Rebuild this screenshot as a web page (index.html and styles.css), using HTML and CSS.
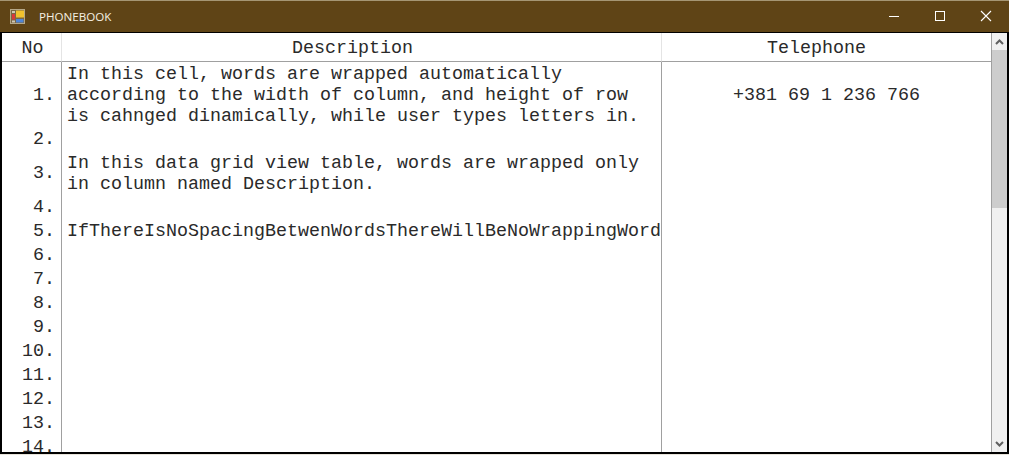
FILE: index.html
```html
<!DOCTYPE html>
<html lang="en">
<head>
<meta charset="utf-8">
<title>PHONEBOOK</title>
<link rel="stylesheet" href="styles.css">
</head>
<body>
<div class="window">
  <header class="titlebar">
    <svg class="app-icon" width="15" height="15" viewBox="0 0 15 15">
      <rect x="0.5" y="0.5" width="14" height="14" fill="#7a6744" stroke="#b5a888"/>
      <rect x="6" y="1.5" width="8" height="7" fill="#f0c22e"/>
      <rect x="2" y="5" width="3" height="5.5" fill="#d8393a"/>
      <rect x="6" y="10" width="7.5" height="3.5" fill="#4f86d8"/>
      <rect x="2" y="2" width="3" height="2" fill="#cfc8b4"/>
      <rect x="2" y="11.5" width="3" height="2" fill="#cfc8b4"/>
    </svg>
    <span class="title">PHONEBOOK</span>
    <div class="controls">
      <span class="control"><svg width="12" height="12" viewBox="0 0 12 12"><path d="M1 6.5h10" stroke="#fff" fill="none"/></svg></span>
      <span class="control"><svg width="12" height="12" viewBox="0 0 12 12"><rect x="1.5" y="1.5" width="9" height="9" stroke="#fff" fill="none"/></svg></span>
      <span class="control"><svg width="12" height="12" viewBox="0 0 12 12"><path d="M1 1l10 10M11 1L1 11" stroke="#fff" stroke-width="1.1" fill="none"/></svg></span>
    </div>
  </header>
  <main class="client">
    <div class="grid">
      <table class="table">
        <colgroup><col class="col-no"><col class="col-desc"><col class="col-tel"></colgroup>
        <thead>
          <tr><th class="head-no">No</th><th class="head-desc">Description</th><th class="head-tel">Telephone</th></tr>
        </thead>
        <tbody>
          <tr class="wrap3"><td class="no">1.</td><td class="desc">In this cell, words are wrapped automatically<br>according to the width of column, and height of row<br>is cahnged dinamically, while user types letters in.</td><td class="tel">+381 69 1 236 766</td></tr>
          <tr><td class="no">2.</td><td class="desc"></td><td class="tel"></td></tr>
          <tr class="wrap2"><td class="no">3.</td><td class="desc">In this data grid view table, words are wrapped only<br>in column named Description.</td><td class="tel"></td></tr>
          <tr><td class="no">4.</td><td class="desc"></td><td class="tel"></td></tr>
          <tr><td class="no">5.</td><td class="desc">IfThereIsNoSpacingBetwenWordsThereWillBeNoWrappingWord</td><td class="tel"></td></tr>
          <tr><td class="no">6.</td><td class="desc"></td><td class="tel"></td></tr>
          <tr><td class="no">7.</td><td class="desc"></td><td class="tel"></td></tr>
          <tr><td class="no">8.</td><td class="desc"></td><td class="tel"></td></tr>
          <tr><td class="no">9.</td><td class="desc"></td><td class="tel"></td></tr>
          <tr><td class="no">10.</td><td class="desc"></td><td class="tel"></td></tr>
          <tr><td class="no">11.</td><td class="desc"></td><td class="tel"></td></tr>
          <tr><td class="no">12.</td><td class="desc"></td><td class="tel"></td></tr>
          <tr><td class="no">13.</td><td class="desc"></td><td class="tel"></td></tr>
          <tr><td class="no">14.</td><td class="desc"></td><td class="tel"></td></tr>
        </tbody>
      </table>
    </div>
    <div class="scrollbar">
      <span class="arrow"><svg width="9" height="6" viewBox="0 0 9 6"><path d="M1 5l3.5-3.5L8 5" stroke="#606060" stroke-width="2" fill="none"/></svg></span>
      <span class="thumb"></span>
      <span class="track"></span>
      <span class="arrow"><svg width="9" height="6" viewBox="0 0 9 6"><path d="M1 1l3.5 3.5L8 1" stroke="#606060" stroke-width="2" fill="none"/></svg></span>
    </div>
  </main>
</div>
</body>
</html>
```
FILE: styles.css
```css
* { box-sizing: border-box; }
html, body { margin: 0; padding: 0; height: 100%; overflow: hidden; background: #e8e4da; }
.window {
  width: 1009px;
  height: 454px;
  display: flex;
  flex-direction: column;
  background: #5f4416;
  border-top: 1px solid #a59674;
}
.titlebar {
  height: 31px;
  flex: none;
  display: flex;
  align-items: center;
  padding-left: 10px;
  color: #f6f0e2;
  font: 11.6px "Open Sans", "Liberation Sans", sans-serif;
}
.app-icon { flex: none; margin-top: -1px; }
.title { margin-left: 14px; margin-top: -1px; }
.controls { margin-left: auto; display: flex; height: 100%; }
.control {
  width: 46px;
  display: flex;
  align-items: center;
  justify-content: center;
  padding-bottom: 2px;
}
.client {
  flex: 1;
  min-height: 0;
  display: flex;
  border: 2px solid #000;
  border-top-width: 1px;
  background: #fff;
}
.grid { flex: 1; min-width: 0; overflow: hidden; border-right: 1px solid #a0a0a0; }
.table {
  width: 989px;
  table-layout: fixed;
  border-collapse: separate;
  border-spacing: 0;
  font: 18.33px/21px "Liberation Mono", "Courier New", monospace;
  color: #2a2a2a;
}
.col-no { width: 60px; }
.col-desc { width: 600px; }
.col-tel { width: 329px; }
th {
  height: 29px;
  padding: 3px 0 0;
  font-weight: 400;
  text-align: center;
  border-right: 1px solid #e4e4e4;
  border-bottom: 1px solid #a0a0a0;
}
th:last-child { border-right: 0; }
.head-no { padding-left: 2px; }
.head-desc { padding-right: 18px; }
.head-tel { padding-right: 20px; }
td {
  height: 24px;
  padding: 1px 0 0;
  vertical-align: middle;
  border-right: 1px solid #a0a0a0;
  white-space: nowrap;
}
td:last-child { border-right: 0; }
.wrap3 td { height: 64px; padding-top: 2px; }
.wrap2 td { height: 44px; }
.no { text-align: right; padding-right: 6px; }
.desc { padding-left: 5px; overflow: hidden; }
.tel { text-align: center; }
.scrollbar {
  width: 15px;
  flex: none;
  display: flex;
  flex-direction: column;
  background: #f0f0f0;
}
.arrow {
  height: 17px;
  flex: none;
  display: flex;
  align-items: center;
  justify-content: center;
}
.thumb { height: 158px; flex: none; background: #cdcdcd; }
.track { flex: 1; }
```
